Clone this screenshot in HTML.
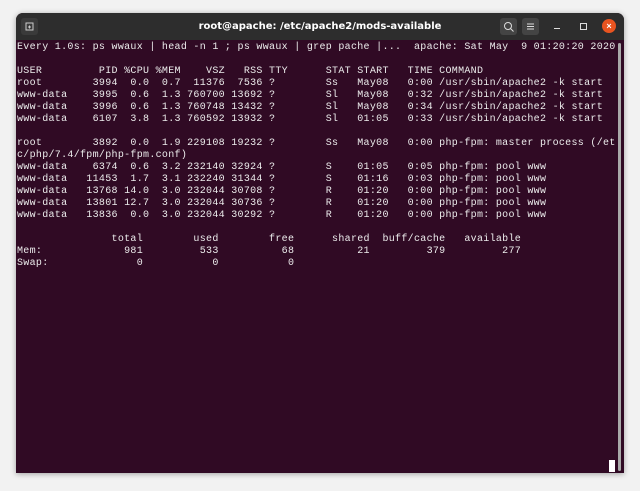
<!DOCTYPE html>
<html><head><style>
html,body{margin:0;padding:0;width:640px;height:491px;background:#f2f2f2;overflow:hidden}
.win{position:absolute;left:16px;top:13px;width:608px;height:460px;background:#300a24;border-radius:7px 7px 0 0;box-shadow:0 1px 6px rgba(0,0,0,.35);overflow:hidden}
.tb{position:absolute;left:0;top:0;width:608px;height:27px;background:#2d2d2d;color:#fff;font:bold 10px "DejaVu Sans","Liberation Sans",sans-serif;text-align:center;line-height:27px}
.btn{position:absolute;top:5px;width:17px;height:17px;background:#444;border-radius:3px}
pre{position:absolute;left:1px;top:29px;margin:0;font:10px/12px "Liberation Mono","DejaVu Sans Mono",monospace;letter-spacing:0.3px;color:#ececec;white-space:pre}
.sb{position:absolute;left:602px;top:30px;width:3px;height:428px;background:#a9a9a9;border-radius:2px}
.cur{position:absolute;left:593px;top:447px;width:6px;height:12px;background:#fff}
</style></head><body>
<div class="win">
<div class="tb">root@apache: /etc/apache2/mods-available</div>
<div class="btn" style="left:5px;background:#3a3a3a"><svg width="17" height="17"><path d="M5 5h7v7H5zM7 9h3M8.5 7.5v3" stroke="#ccc" fill="none"/></svg></div>
<div class="btn" style="left:484px"><svg width="17" height="17"><circle cx="8" cy="8" r="3.5" stroke="#ddd" fill="none"/><path d="M10.5 10.5l3 3" stroke="#ddd"/></svg></div>
<div class="btn" style="left:506px"><svg width="17" height="17"><path d="M5 6h7M5 8.5h7M5 11h7" stroke="#ddd"/></svg></div>
<div style="position:absolute;left:538px;top:15px;width:6px;height:1px;background:#ddd"></div>
<div style="position:absolute;left:564px;top:10px;width:5px;height:5px;border:1px solid #ddd"></div>
<div style="position:absolute;left:586px;top:6px;width:14px;height:14px;border-radius:50%;background:#e95420;color:#fff;font:bold 9px/14px sans-serif;text-align:center">×</div>
<pre>Every 1.0s: ps wwaux | head -n 1 ; ps wwaux | grep pache |...  apache: Sat May  9 01:20:20 2020

USER         PID %CPU %MEM    VSZ   RSS TTY      STAT START   TIME COMMAND
root        3994  0.0  0.7  11376  7536 ?        Ss   May08   0:00 /usr/sbin/apache2 -k start
www-data    3995  0.6  1.3 760700 13692 ?        Sl   May08   0:32 /usr/sbin/apache2 -k start
www-data    3996  0.6  1.3 760748 13432 ?        Sl   May08   0:34 /usr/sbin/apache2 -k start
www-data    6107  3.8  1.3 760592 13932 ?        Sl   01:05   0:33 /usr/sbin/apache2 -k start

root        3892  0.0  1.9 229108 19232 ?        Ss   May08   0:00 php-fpm: master process (/et
c/php/7.4/fpm/php-fpm.conf)
www-data    6374  0.6  3.2 232140 32924 ?        S    01:05   0:05 php-fpm: pool www
www-data   11453  1.7  3.1 232240 31344 ?        S    01:16   0:03 php-fpm: pool www
www-data   13768 14.0  3.0 232044 30708 ?        R    01:20   0:00 php-fpm: pool www
www-data   13801 12.7  3.0 232044 30736 ?        R    01:20   0:00 php-fpm: pool www
www-data   13836  0.0  3.0 232044 30292 ?        R    01:20   0:00 php-fpm: pool www

               total        used        free      shared  buff/cache   available
Mem:             981         533          68          21         379         277
Swap:              0           0           0</pre>
<div class="sb"></div>
<div class="cur"></div>
</div>
</body></html>
